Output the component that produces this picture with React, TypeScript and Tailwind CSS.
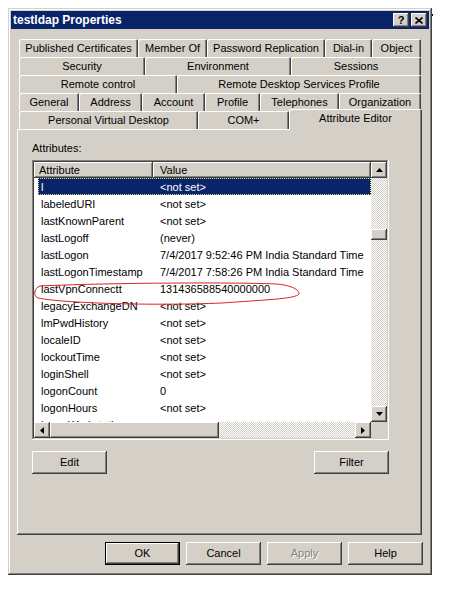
import React from 'react';

const raised =
  'shadow-[inset_-1px_-1px_#404040,inset_1px_1px_#ffffff,inset_-2px_-2px_#808080,inset_2px_2px_#d4d0c8]';
const tabShadow = 'shadow-[inset_1px_1px_#ffffff,inset_-1px_0_#404040,inset_-2px_0_#808080]';

type Tab = { label: string; w: number };

const tabRows: Tab[][] = [
  [
    { label: 'Published Certificates', w: 119 },
    { label: 'Member Of', w: 69 },
    { label: 'Password Replication', w: 118 },
    { label: 'Dial-in', w: 47 },
    { label: 'Object', w: 49 },
  ],
  [
    { label: 'Security', w: 126 },
    { label: 'Environment', w: 146 },
    { label: 'Sessions', w: 130 },
  ],
  [
    { label: 'Remote control', w: 158 },
    { label: 'Remote Desktop Services Profile', w: 244 },
  ],
  [
    { label: 'General', w: 60 },
    { label: 'Address', w: 63 },
    { label: 'Account', w: 63 },
    { label: 'Profile', w: 55 },
    { label: 'Telephones', w: 79 },
    { label: 'Organization', w: 82 },
  ],
];

const attrs: [string, string][] = [
  ['l', '<not set>'],
  ['labeledURI', '<not set>'],
  ['lastKnownParent', '<not set>'],
  ['lastLogoff', '(never)'],
  ['lastLogon', '7/4/2017 9:52:46 PM India Standard Time'],
  ['lastLogonTimestamp', '7/4/2017 7:58:26 PM India Standard Time'],
  ['lastVpnConnectt', '131436588540000000'],
  ['legacyExchangeDN', '<not set>'],
  ['lmPwdHistory', '<not set>'],
  ['localeID', '<not set>'],
  ['lockoutTime', '<not set>'],
  ['loginShell', '<not set>'],
  ['logonCount', '0'],
  ['logonHours', '<not set>'],
  ['logonWorkstation', ''],
];

const Arrow = ({ dir }: { dir: 'up' | 'down' | 'left' | 'right' }) => {
  const pts = {
    up: '3.5,0 7,4 0,4',
    down: '0,0 7,0 3.5,4',
    left: '4,0 4,7 0,3.5',
    right: '0,0 4,3.5 0,7',
  }[dir];
  const vertical = dir === 'up' || dir === 'down';
  return (
    <svg width={vertical ? 7 : 4} height={vertical ? 4 : 7} viewBox={vertical ? '0 0 7 4' : '0 0 4 7'}>
      <polygon points={pts} fill="#000" />
    </svg>
  );
};

const ScrollBtn = ({ dir }: { dir: 'up' | 'down' | 'left' | 'right' }) => (
  <div className={`w-[16px] h-[16px] shrink-0 bg-[#d4d0c8] flex items-center justify-center ${raised}`}>
    <Arrow dir={dir} />
  </div>
);

const Button = ({ label, def, disabled }: { label: string; def?: boolean; disabled?: boolean }) => (
  <div
    className={`w-[75px] h-[23px] bg-[#d4d0c8] flex items-center justify-center leading-none ${
      def
        ? 'shadow-[inset_0_0_0_1px_#000000,inset_-2px_-2px_#404040,inset_2px_2px_#ffffff,inset_-3px_-3px_#808080]'
        : raised
    } ${disabled ? 'text-[#808080] [text-shadow:1px_1px_#ffffff]' : 'text-black'}`}
  >
    {label}
  </div>
);

const checker =
  'bg-[image:repeating-conic-gradient(#d4d0c8_0_25%,#ffffff_0_50%)] bg-[length:2px_2px]';

export default function App() {
  return (
    <div className="relative w-[472px] h-[590px] bg-white overflow-hidden font-['Liberation_Sans',Arial,sans-serif] text-[11px] text-black">
      <div className="ml-[8px] mt-[8px] w-[424px] h-[567px] bg-[#d4d0c8] p-[3px] shadow-[inset_-1px_-1px_#404040,inset_1px_1px_#d4d0c8,inset_-2px_-2px_#808080,inset_2px_2px_#ffffff] flex flex-col">
        {/* title bar */}
        <div className="h-[18px] bg-[#0a246a] flex items-center justify-between pl-[2px] pr-[2px]">
          <span className="text-white font-bold text-[12px] leading-none">testldap Properties</span>
          <div className="flex gap-[2px]">
            <div className={`w-[16px] h-[14px] bg-[#d4d0c8] flex items-center justify-center font-bold text-[11px] leading-none ${raised}`}>
              ?
            </div>
            <div className={`w-[16px] h-[14px] bg-[#d4d0c8] flex items-center justify-center ${raised}`}>
              <svg width="8" height="7" viewBox="0 0 8 7">
                <path d="M0.5 0.5 L7.5 6.5 M7.5 0.5 L0.5 6.5" stroke="#000" strokeWidth="1.6" />
              </svg>
            </div>
          </div>
        </div>

        <div className="px-[6px] pt-[10px] flex flex-col">
          {/* tabs */}
          {tabRows.map((row, i) => (
            <div key={i} className="flex ml-[2px] h-[18px]">
              {row.map((t) => (
                <div
                  key={t.label}
                  style={{ width: t.w }}
                  className={`h-[18px] bg-[#d4d0c8] rounded-t-[2px] text-center leading-[19px] whitespace-nowrap ${tabShadow}`}
                >
                  {t.label}
                </div>
              ))}
            </div>
          ))}
          <div className="flex ml-[2px] h-[18px] items-end">
            <div className={`w-[179px] h-[18px] bg-[#d4d0c8] rounded-t-[2px] text-center leading-[19px] ${tabShadow}`}>
              Personal Virtual Desktop
            </div>
            <div className={`w-[91px] h-[18px] bg-[#d4d0c8] rounded-t-[2px] text-center leading-[19px] ${tabShadow}`}>
              COM+
            </div>
            <div
              className={`relative z-10 w-[133px] h-[21px] -mt-[2px] -mb-[1px] self-start bg-[#d4d0c8] rounded-t-[2px] text-center leading-[18px] ${tabShadow}`}
            >
              Attribute Editor
            </div>
          </div>

          {/* panel */}
          <div className="w-[405px] h-[406px] pl-[15px] pt-[13px] shadow-[inset_-1px_-1px_#404040,inset_1px_1px_#ffffff,inset_-2px_-2px_#808080]">
            <div className="h-[13px] leading-[13px] mb-[5px]">Attributes:</div>

            <div className="w-[357px] h-[280px] p-[2px] bg-white shadow-[inset_-1px_-1px_#ffffff,inset_1px_1px_#808080,inset_-2px_-2px_#d4d0c8,inset_2px_2px_#404040] flex">
              <div className="w-[337px] flex flex-col">
                <div className="h-[16px] flex">
                  <div className={`w-[119px] h-[16px] bg-[#d4d0c8] pl-[5px] leading-[16px] ${raised}`}>Attribute</div>
                  <div className={`flex-1 h-[16px] bg-[#d4d0c8] pl-[7px] leading-[16px] ${raised}`}>Value</div>
                </div>
                <div className="h-[244px] overflow-hidden">
                  {attrs.map(([name, value], i) => (
                    <div key={name} className="h-[17px] pl-[4px] flex">
                      <div
                        className={`flex-1 flex pt-[1px] leading-[16px] whitespace-nowrap ${
                          i === 0
                            ? 'bg-[#0a246a] text-white outline-1 outline-dotted outline-[#e8e070] -outline-offset-1'
                            : ''
                        }`}
                      >
                        <div className="w-[115px] pl-[3px]">{name}</div>
                        <div className="pl-[7px]">{value}</div>
                      </div>
                    </div>
                  ))}
                </div>
                <div className={`h-[16px] flex ${checker}`}>
                  <ScrollBtn dir="left" />
                  <div className={`w-[169px] h-[16px] bg-[#d4d0c8] ${raised}`} />
                  <div className="flex-1" />
                  <ScrollBtn dir="right" />
                </div>
              </div>
              <div className="w-[16px] flex flex-col">
                <div className={`h-[260px] flex flex-col ${checker}`}>
                  <ScrollBtn dir="up" />
                  <div className="flex-1">
                    <div className={`mt-[51px] h-[11px] bg-[#d4d0c8] ${raised}`} />
                  </div>
                  <ScrollBtn dir="down" />
                </div>
                <div className="h-[16px] bg-[#d4d0c8]" />
              </div>
            </div>

            <div className="w-[357px] mt-[11px] flex justify-between">
              <Button label="Edit" />
              <Button label="Filter" />
            </div>
          </div>

          {/* dialog buttons */}
          <div className="mt-[7px] flex justify-end gap-[6px]">
            <Button label="OK" def />
            <Button label="Cancel" />
            <Button label="Apply" disabled />
            <Button label="Help" />
          </div>
        </div>
      </div>

      {/* hand-drawn annotation over the list */}
      <svg className="absolute left-0 top-0 pointer-events-none" width="472" height="590">
        <path
          d="M40 286 C100 283 230 282 276 284 C291 285 300 290 299 294 C296 299 262 300 222 303 C150 306 62 303 38 298 C33 296 34 288 40 286"
          fill="none"
          stroke="#e02020"
          strokeWidth="1"
        />
        <rect x="432" y="14" width="1" height="2" fill="#000" />
      </svg>
    </div>
  );
}
